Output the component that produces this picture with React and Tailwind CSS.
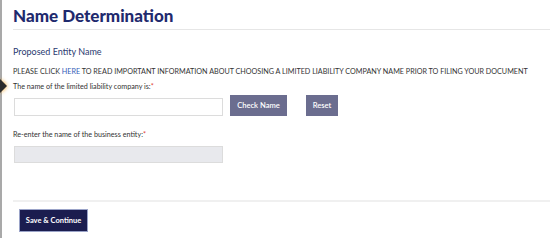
export default function App() {
  return (
    <div className="relative h-[238px] w-[550px] overflow-hidden bg-white font-['Lato',sans-serif] text-[#333]">
      {/* left rail + step marker */}
      <div className="absolute left-0 top-0 h-full w-[2px] bg-[#a9a9a9]" />
      <div className="absolute left-0 top-[79px] h-0 w-0 border-y-[7px] border-l-[7px] border-y-transparent border-l-[#2b2b2b] drop-shadow-[0_0_2px_#f0a020]" />

      <div className="pl-[13px]">
        <h1 className="pt-[6px] text-[17px] font-black leading-[20px] text-[#1f2a6e]">Name Determination</h1>
        <div className="mt-[3px] h-px bg-[#e6e6e6]" />

        <div>
          <h2 className="mt-[16px] text-[9px] leading-[12px] text-[#2a3a70]">Proposed Entity Name</h2>
          <p className="mt-[9px] whitespace-nowrap text-[7.2px] leading-[10px] text-[#333]">
            PLEASE CLICK <span className="text-[#2f5cb8]">HERE</span> TO READ IMPORTANT INFORMATION ABOUT CHOOSING A LIMITED LIABILITY COMPANY NAME PRIOR TO FILING YOUR DOCUMENT
          </p>
          <label className="mt-[5px] block text-[7.2px] leading-[10px] text-[#333]">
            The name of the limited liability company is:<span className="text-[#e0403a]">*</span>
          </label>
          <div className="mt-[3px] flex items-end">
            <input className="ml-px h-[18px] w-[209px] border border-[#dcdcdc] bg-white outline-none" />
            <button className="ml-[7px] h-[21px] w-[57px] bg-[#6b6d8f] text-[7.6px] font-semibold text-white">Check Name</button>
            <button className="ml-[19px] h-[21px] w-[32px] bg-[#6b6d8f] text-[7.6px] font-semibold text-white">Reset</button>
          </div>
          <label className="mt-[14px] block text-[7.2px] leading-[10px] text-[#333]">
            Re-enter the name of the business entity:<span className="text-[#e0403a]">*</span>
          </label>
          <input disabled className="ml-px mt-[6px] block h-[17px] w-[209px] border border-[#dcdcdc] bg-[#e8e9ed]" />
        </div>

        <div className="mt-[37px] h-[2px] bg-[#f0f0f0]" />
        <button className="ml-[6px] mt-[7px] h-[23px] w-[69px] border border-[#9aa3c8] bg-[#1b1d4f] text-[7.5px] font-bold text-white">Save &amp; Continue</button>
      </div>
    </div>
  )
}
